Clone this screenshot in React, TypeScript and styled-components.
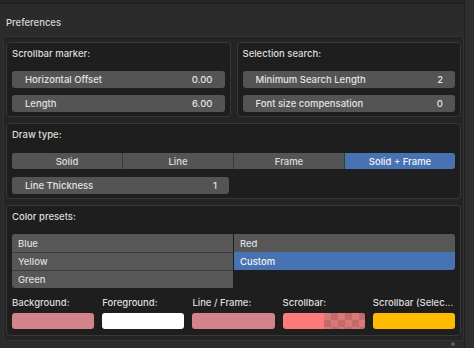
import React from 'react';
import styled, { createGlobalStyle, css } from 'styled-components';

const GlobalStyle = createGlobalStyle`
  html, body {
    margin: 0;
    padding: 0;
    background: #2b2b2b;
  }
  body {
    font-family: "Inter", "DejaVu Sans", sans-serif;
    font-size: 9.5px;
    font-weight: 500;
    color: #dddddd;
  }
`;

const Screen = styled.div`
  width: 474px;
  height: 348px;
  display: flex;
  background: #2b2b2b;
  overflow: hidden;
`;

const Main = styled.div`
  width: 464px;
  display: flex;
  flex-direction: column;
`;

const SideStrip = styled.div`
  flex: 1;
  background: #2e2e2e;
  border-left: 1px solid #222222;
  position: relative;
`;

const TopStrip = styled.div`
  height: 3px;
  background: #252525;
  border-bottom: 1px solid #202020;
`;

const Header = styled.div`
  height: 32px;
  box-sizing: border-box;
  padding: 12px 0 0 6px;
  line-height: 14px;
  color: #d6d6d6;
`;

const Panel = styled.div`
  margin-left: 3px;
  background: #242424;
  border: 1px solid #333333;
  border-radius: 3px;
  padding: 5px 2px 4px 2px;
  display: flex;
  flex-direction: column;
  gap: 6px;
`;

const Row = styled.div`
  display: grid;
  grid-template-columns: 1fr 1fr;
  gap: 6px;
`;

const Box = styled.div`
  background: #1e1e1e;
  border: 1px solid #383838;
  border-radius: 4px;
  padding: 4px 5px 4px 5px;
  display: flex;
  flex-direction: column;
`;

const BoxTitle = styled.div<{ $gap?: number }>`
  line-height: 14px;
  margin-bottom: ${({ $gap }) => $gap ?? 10}px;
  color: #dcdcdc;
`;

const Fields = styled.div<{ $gap?: number }>`
  display: flex;
  flex-direction: column;
  gap: ${({ $gap }) => $gap ?? 7}px;
`;

const Field = styled.div<{ $half?: boolean }>`
  height: 17px;
  width: ${({ $half }) => ($half ? '217px' : 'auto')};
  background: #545454;
  border-radius: 3px;
  display: flex;
  align-items: center;
  justify-content: space-between;
  padding: 0 12px 0 13px;
  box-sizing: border-box;
  color: #e2e2e2;
`;

const Segmented = styled.div`
  display: grid;
  grid-template-columns: repeat(4, 1fr);
  gap: 1px;
  background: #3a3a3a;
  border-radius: 3px;
  overflow: hidden;
  margin-bottom: 8px;
`;

const Segment = styled.div<{ $active?: boolean }>`
  height: 16px;
  display: flex;
  align-items: center;
  justify-content: center;
  background: #545454;
  color: #dedede;
  ${({ $active }) =>
    $active &&
    css`
      background: #4772b3;
      color: #f2f2f2;
    `}
`;

const PresetList = styled.div`
  display: grid;
  grid-template-columns: 1fr 1fr;
  grid-auto-flow: column;
  grid-template-rows: repeat(3, 18px);
  column-gap: 1px;
  margin-bottom: 8px;
`;

const PresetItem = styled.div<{ $active?: boolean; $top?: boolean; $bottom?: boolean; $right?: boolean }>`
  display: flex;
  align-items: center;
  padding-left: 6px;
  background: #575757;
  color: #dedede;
  border-top: 1px solid ${({ $top }) => ($top ? '#575757' : '#3c3c3c')};
  box-sizing: border-box;
  ${({ $top, $right }) => $top && css`border-top-${$right ? 'right' : 'left'}-radius: 3px;`}
  ${({ $bottom, $right }) => $bottom && css`border-bottom-${$right ? 'right' : 'left'}-radius: 3px;`}
  ${({ $active }) =>
    $active &&
    css`
      background: #4772b3;
      border-top-color: #4772b3;
      color: #f2f2f2;
    `}
`;

const Empty = styled.div``;

const Swatches = styled.div`
  display: grid;
  grid-template-columns: repeat(5, 1fr);
  column-gap: 8px;
  padding-bottom: 2px;
`;

const Swatch = styled.div`
  display: flex;
  flex-direction: column;
  gap: 3px;
  min-width: 0;
`;

const SwatchLabel = styled.div`
  line-height: 14px;
  white-space: nowrap;
  color: #dcdcdc;
`;

const ColorBar = styled.div<{ $color: string }>`
  height: 16px;
  border-radius: 3px;
  background: ${({ $color }) => $color};
`;

const AlphaBar = styled.div`
  height: 16px;
  border-radius: 3px;
  overflow: hidden;
  display: flex;
`;

const AlphaSolid = styled.div`
  flex: 1;
  background: #ff7b7b;
`;

const AlphaChecker = styled.div`
  flex: 1;
  background-color: #d97878;
  background-image: linear-gradient(45deg, #c56a6a 25%, transparent 25%, transparent 75%, #c56a6a 75%),
    linear-gradient(45deg, #c56a6a 25%, transparent 25%, transparent 75%, #c56a6a 75%);
  background-size: 14px 14px;
  background-position: 0 0, 7px 7px;
`;

const Grip = styled.div`
  position: absolute;
  left: -14px;
  bottom: 2px;
  width: 4px;
  height: 4px;
  border-radius: 50%;
  background: #5a5a5a;
`;

const presets = ['Blue', 'Yellow', 'Green', 'Red', 'Custom'];
const drawTypes = ['Solid', 'Line', 'Frame', 'Solid + Frame'];

const swatches = [
  { label: 'Background:', color: '#d3848b' },
  { label: 'Foreground:', color: '#ffffff' },
  { label: 'Line / Frame:', color: '#d3848b' },
  { label: 'Scrollbar:', color: 'alpha' },
  { label: 'Scrollbar (Selec...', color: '#ffbb00' },
];

export default function App() {
  return (
    <>
      <GlobalStyle />
      <Screen>
        <Main>
          <TopStrip />
          <Header>Preferences</Header>
          <Panel>
            <Row>
              <Box>
                <BoxTitle>Scrollbar marker:</BoxTitle>
                <Fields>
                  <Field>
                    <span>Horizontal Offset</span>
                    <span>0.00</span>
                  </Field>
                  <Field>
                    <span>Length</span>
                    <span>6.00</span>
                  </Field>
                </Fields>
              </Box>
              <Box>
                <BoxTitle>Selection search:</BoxTitle>
                <Fields>
                  <Field>
                    <span>Minimum Search Length</span>
                    <span>2</span>
                  </Field>
                  <Field>
                    <span>Font size compensation</span>
                    <span>0</span>
                  </Field>
                </Fields>
              </Box>
            </Row>
            <Box>
              <BoxTitle $gap={11}>Draw type:</BoxTitle>
              <Segmented>
                {drawTypes.map((t) => (
                  <Segment key={t} $active={t === 'Solid + Frame'}>
                    {t}
                  </Segment>
                ))}
              </Segmented>
              <Field $half>
                <span>Line Thickness</span>
                <span>1</span>
              </Field>
            </Box>
            <Box>
              <BoxTitle>Color presets:</BoxTitle>
              <PresetList>
                <PresetItem $top>{presets[0]}</PresetItem>
                <PresetItem>{presets[1]}</PresetItem>
                <PresetItem $bottom>{presets[2]}</PresetItem>
                <PresetItem $top $right>{presets[3]}</PresetItem>
                <PresetItem $active $bottom $right>{presets[4]}</PresetItem>
                <Empty />
              </PresetList>
              <Swatches>
                {swatches.map((s) => (
                  <Swatch key={s.label}>
                    <SwatchLabel>{s.label}</SwatchLabel>
                    {s.color === 'alpha' ? (
                      <AlphaBar>
                        <AlphaSolid />
                        <AlphaChecker />
                      </AlphaBar>
                    ) : (
                      <ColorBar $color={s.color} />
                    )}
                  </Swatch>
                ))}
              </Swatches>
            </Box>
          </Panel>
        </Main>
        <SideStrip>
          <Grip />
        </SideStrip>
      </Screen>
    </>
  );
}
